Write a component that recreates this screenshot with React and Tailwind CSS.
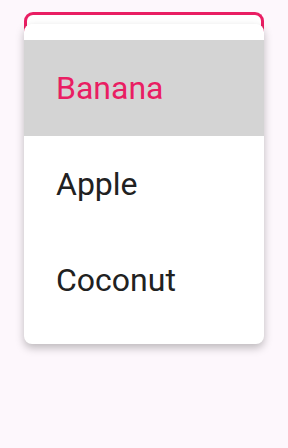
export default function App() {
  const items = [
    { label: "Banana", selected: true },
    { label: "Apple" },
    { label: "Coconut" },
  ];
  return (
    <div className="min-h-[448px] w-[288px] bg-[#fdf7fc]" style={{ fontFamily: "Roboto, sans-serif" }}>
      <div className="relative pt-3 px-6">
        <div className="h-[24px] rounded-t-[9px] border-t-[3px] border-x-[3px] border-[#e91e63] bg-white" />
        <div className="absolute left-6 right-6 top-6 rounded-lg bg-white py-4 shadow-[0_4px_8px_rgba(0,0,0,0.25)]">
          {items.map((it) => (
            <div
              key={it.label}
              className={
                it.selected
                  ? "flex h-24 items-center bg-[#d4d4d4] pl-8 text-[32px] text-[#e91e63]"
                  : "flex h-24 items-center pl-8 text-[32px] text-[#212121]"
              }
            >
              {it.label}
            </div>
          ))}
        </div>
      </div>
    </div>
  );
}
